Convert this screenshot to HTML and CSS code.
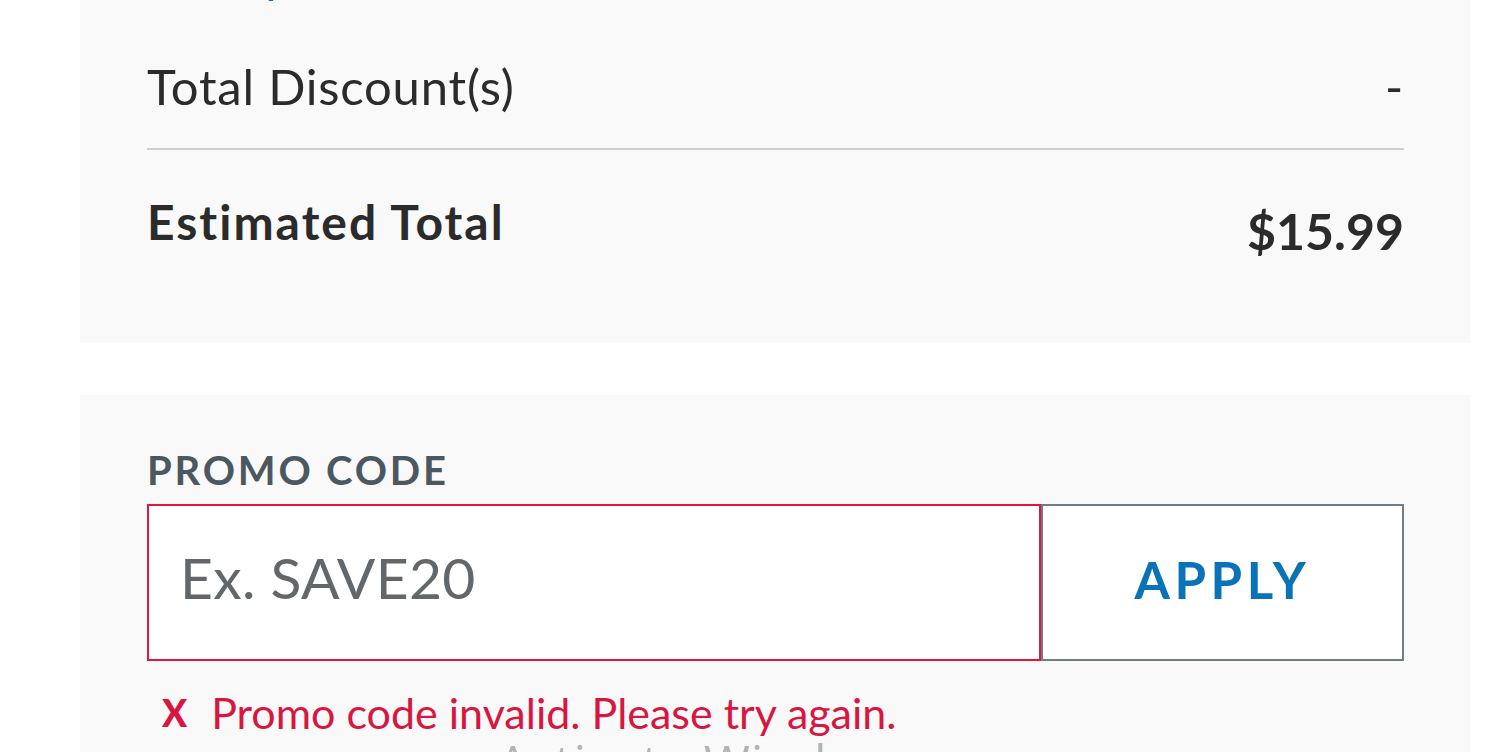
FILE: index.html
```html
<!DOCTYPE html>
<html lang="en">
<head>
  <meta charset="UTF-8">
  <title>Order Summary</title>
  <meta name="viewport" content="width=device-width, initial-scale=1.0">
  <link rel="stylesheet" href="styles.css">
</head>
<body>
  <div class="summary">
    <div class="row link-row">
      <a class="link" href="#">View promos</a>
    </div>
    <div class="row discount-row">
      <span>Total Discount(s)</span>
      <span>-</span>
    </div>
    <div class="row total-row">
      <span class="total-label">Estimated Total</span>
      <span class="total-amount">$15.99</span>
    </div>
  </div>

  <div class="promo">
    <label class="promo-label" for="promo">PROMO CODE</label>
    <div class="promo-field">
      <input class="promo-input" id="promo" type="text" placeholder="Ex. SAVE20">
      <button class="apply-btn">APPLY</button>
    </div>
    <div class="promo-error">
      <span class="error-x">X</span>
      <span>Promo code invalid. Please try again.</span>
    </div>
  </div>

  <div class="watermark">Activate Windows</div>
</body>
</html>
```

FILE: styles.css
```css
body {
  margin: 0;
  background: #fff;
  font-family: Lato, "Open Sans", Arial, sans-serif;
  color: #2b2b2b;
  overflow: hidden;
  height: 752px;
  position: relative;
}

.summary {
  margin: -62px 30px 0 80px;
  background: #f9f9f9;
  padding: 0 66px 0 67px;
  height: 405px;
  box-sizing: border-box;
  overflow: hidden;
}

.row {
  display: flex;
  justify-content: space-between;
}

.link-row {
  height: 62px;
  align-items: flex-end;
}
.link {
  color: #0a73b8;
  text-decoration: none;
  font-size: 48px;
  line-height: 1;
  margin-bottom: 1px;
}

.discount-row {
  font-size: 49px;
  letter-spacing: 0.8px;
  line-height: 1;
  padding: 62px 0 37px 0;
  border-bottom: 2px solid #cfcfcf;
}

.total-row {
  font-weight: bold;
  padding-top: 48px;
}
.total-label {
  font-size: 48px;
  letter-spacing: 2px;
  line-height: 1;
}
.total-amount {
  font-size: 50px;
  line-height: 1;
  margin-top: 8px;
}

.promo {
  margin: 52px 30px 0 80px;
  background: #f9f9f9;
  padding: 55px 66px 0 67px;
  height: 357px;
  box-sizing: border-box;
}

.promo-label {
  display: block;
  font-size: 40px;
  font-weight: bold;
  letter-spacing: 2.8px;
  color: #4b5761;
  line-height: 1;
  margin-bottom: 14px;
}

.promo-field {
  display: flex;
  height: 157px;
}

.promo-input {
  flex: 1;
  min-width: 0;
  border: 2px solid #e0163e;
  background: #fff;
  font-family: Lato, "Open Sans", Arial, sans-serif;
  font-size: 57px;
  font-weight: normal;
  letter-spacing: 0.3px;
  padding: 0 0 12px 31px;
  outline: none;
  color: #333;
}
.promo-input::placeholder {
  color: #62676b;
}

.apply-btn {
  width: 363px;
  border: 2px solid #707c86;
  background: #fff;
  color: #0a73b8;
  font-family: Lato, "Open Sans", Arial, sans-serif;
  font-weight: bold;
  font-size: 51px;
  letter-spacing: 4.5px;
  padding: 0 0 6px 0;
  cursor: pointer;
}

.promo-error {
  display: flex;
  align-items: center;
  gap: 24px;
  margin-top: 30px;
  padding-left: 15px;
  color: #d8163f;
  font-size: 43px;
  line-height: 1;
}
.error-x {
  font-weight: 900;
  font-size: 37px;
}

.watermark {
  position: absolute;
  left: 497px;
  top: 728px;
  font-family: "Segoe UI", "Open Sans", Arial, sans-serif;
  font-size: 50px;
  color: rgba(0, 0, 0, 0.28);
  letter-spacing: 1px;
}
```
